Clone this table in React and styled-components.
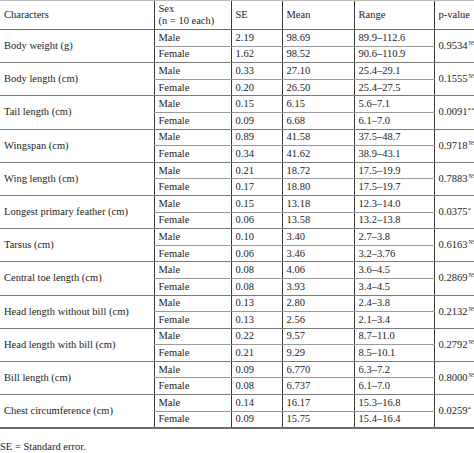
import React from "react"
import styled, { createGlobalStyle } from "styled-components"

const GlobalStyle = createGlobalStyle`
    html, body {
        margin: 0;
        padding: 0;
        background: #fff;
        overflow: hidden;
    }
    body {
        font-family: "Liberation Serif", "DejaVu Serif", serif;
        color: #232323;
    }
`

const rows = [
    ["Body weight (g)", ["2.19", "98.69", "89.9–112.6"], ["1.62", "98.52", "90.6–110.9"], "0.9534", "NS"],
    ["Body length (cm)", ["0.33", "27.10", "25.4–29.1"], ["0.20", "26.50", "25.4–27.5"], "0.1555", "NS"],
    ["Tail length (cm)", ["0.15", "6.15", "5.6–7.1"], ["0.09", "6.68", "6.1–7.0"], "0.0091", "**"],
    ["Wingspan (cm)", ["0.89", "41.58", "37.5–48.7"], ["0.34", "41.62", "38.9–43.1"], "0.9718", "NS"],
    ["Wing length (cm)", ["0.21", "18.72", "17.5–19.9"], ["0.17", "18.80", "17.5–19.7"], "0.7883", "NS"],
    ["Longest primary feather (cm)", ["0.15", "13.18", "12.3–14.0"], ["0.06", "13.58", "13.2–13.8"], "0.0375", "*"],
    ["Tarsus (cm)", ["0.10", "3.40", "2.7–3.8"], ["0.06", "3.46", "3.2–3.76"], "0.6163", "NS"],
    ["Central toe length (cm)", ["0.08", "4.06", "3.6–4.5"], ["0.08", "3.93", "3.4–4.5"], "0.2869", "NS"],
    ["Head length without bill (cm)", ["0.13", "2.80", "2.4–3.8"], ["0.13", "2.56", "2.1–3.4"], "0.2132", "NS"],
    ["Head length with bill (cm)", ["0.22", "9.57", "8.7–11.0"], ["0.21", "9.29", "8.5–10.1"], "0.2792", "NS"],
    ["Bill length (cm)", ["0.09", "6.770", "6.3–7.2"], ["0.08", "6.737", "6.1–7.0"], "0.8000", "NS"],
    ["Chest circumference (cm)", ["0.14", "16.17", "15.3–16.8"], ["0.09", "15.75", "15.4–16.4"], "0.0259", "*"],
]

export default function App() {
    return (
        <>
            <GlobalStyle />
            <Page>
                <Table>
                    <colgroup>
                        <col style={{ width: 154 }} />
                        <col style={{ width: 77 }} />
                        <col style={{ width: 51 }} />
                        <col style={{ width: 72 }} />
                        <col style={{ width: 80 }} />
                        <col style={{ width: 40 }} />
                    </colgroup>
                    <thead>
                        <tr>
                            <Head $first>Characters</Head>
                            <Head>Sex<br />(n = 10 each)</Head>
                            <Head>SE</Head>
                            <Head>Mean</Head>
                            <Head>Range</Head>
                            <Head>p-value</Head>
                        </tr>
                    </thead>
                    <tbody>
                        {rows.map((row, index) => {
                            const last = index === rows.length - 1
                            return (
                                <React.Fragment key={index}>
                                    <tr>
                                        <Group rowSpan={2} $first $last={last}>{row[0]}</Group>
                                        <Cell>Male</Cell>
                                        {row[1].map((v, i) => <Cell key={i}>{v}</Cell>)}
                                        <Group rowSpan={2} $last={last}>
                                            {row[3]}<Sup $ns={row[4] === "NS"}>{row[4]}</Sup>
                                        </Group>
                                    </tr>
                                    <tr>
                                        <Cell $end $last={last}>Female</Cell>
                                        {row[2].map((v, i) => <Cell key={i} $end $last={last}>{v}</Cell>)}
                                    </tr>
                                </React.Fragment>
                            )
                        })}
                    </tbody>
                </Table>
                <Footnote>SE = Standard error.</Footnote>
            </Page>
        </>
    )
}

const Page = styled.div`
    width: 474px;
    overflow: hidden;
`

const Table = styled.table`
    border-collapse: collapse;
    table-layout: fixed;
    width: 474px;
    font-size: 10.5px;
    line-height: 12px;
`

const Head = styled.th`
    height: 28px;
    padding: 0 4px;
    text-align: left;
    font-weight: normal;
    vertical-align: middle;
    white-space: nowrap;
    overflow: hidden;
    border-top: 1px solid #bbb;
    border-bottom: 1px solid #6a6a6a;
    border-left: ${(props) => props.$first ? "none" : "1px solid #3a3a3a"};
`

const Cell = styled.td`
    height: 15.6px;
    padding: 0 4px;
    white-space: nowrap;
    vertical-align: middle;
    border-left: 1px solid #3a3a3a;
    border-bottom: ${(props) => props.$last ? "2px solid #6a6a6a" : props.$end ? "1px solid #7a7a7a" : "1px solid #9a9a9a"};
`

const Group = styled.td`
    padding: 0 4px;
    white-space: nowrap;
    overflow: hidden;
    vertical-align: middle;
    border-left: ${(props) => props.$first ? "none" : "1px solid #3a3a3a"};
    border-bottom: ${(props) => props.$last ? "2px solid #6a6a6a" : "1px solid #7a7a7a"};
`

const Sup = styled.sup`
    font-size: ${(props) => props.$ns ? "5.5px" : "7px"};
    vertical-align: ${(props) => props.$ns ? "4px" : "3px"};
    line-height: 0;
    margin-left: ${(props) => props.$ns ? "1px" : "0"};
`

const Footnote = styled.p`
    margin: 12px 0 0 0;
    font-size: 10.5px;
    line-height: 12px;
`
